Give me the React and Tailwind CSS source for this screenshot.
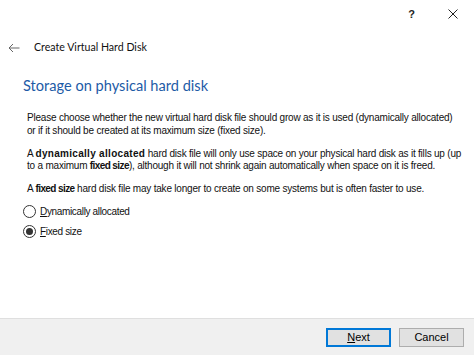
import { useState } from "react";

// Radio button drawn like the classic Windows one
function Radio({ checked, accel, rest, onClick }) {
  return (
    <div className="flex items-center h-[20px] cursor-default" onClick={onClick}>
      <span className="w-[13px] h-[13px] rounded-full border border-[#333] bg-white flex items-center justify-center">
        {checked && <span className="w-[7px] h-[7px] rounded-full bg-[#333]" />}
      </span>
      <span className="ml-[4px]">
        <span className="underline">{accel}</span>
        {rest}
      </span>
    </div>
  );
}

export default function App() {
  const [mode, setMode] = useState("fixed")

  return (
    <div className="w-[474px] h-[355px] bg-white flex flex-col text-[#000] font-['Liberation_Sans',Arial,sans-serif] overflow-hidden">
      {/* title bar */}
      <div className="h-[28px] flex items-center justify-end pr-[15px] text-[#222]">
        <span className="text-[11px] font-bold mr-[33px]">?</span>
        <svg width="10" height="10" viewBox="0 0 10 10" className="mr-[1px]">
          <path d="M0.5 0.5 L9.5 9.5 M9.5 0.5 L0.5 9.5" stroke="#222" strokeWidth="1" />
        </svg>
      </div>

      {/* wizard header */}
      <div className="h-[40px] flex items-center pl-[8px]">
        <svg width="12" height="10" viewBox="0 0 12 10">
          <path d="M11.5 5 H1 M5 1 L1 5 L5 9" stroke="#666" strokeWidth="1" fill="none" />
        </svg>
        <span className="ml-[14px] font-['Lato',sans-serif] text-[10.6px] text-[#111]">Create Virtual Hard Disk</span>
      </div>

      {/* page */}
      <div className="flex-1 pl-[23px]">
        <h1 className="mt-[8px] font-['Lato',sans-serif] text-[14.6px] leading-[20px] text-[#1d5ba6]">Storage on physical hard disk</h1>

        <div className="pl-[4px] mt-[16px] text-[10px] leading-[12.5px] tracking-[-0.21px] text-[#111] whitespace-nowrap space-y-[10.5px]">
          <p>
            Please choose whether the new virtual hard disk file should grow as it is used (dynamically allocated)
            <br />
            or if it should be created at its maximum size (fixed size).
          </p>
          <p>
            A <b className="tracking-[0.3px]">dynamically allocated</b> hard disk file will only use space on your physical hard disk as it fills up (up
            <br />
            to a maximum <b className="tracking-[-0.6px]">fixed size</b>), although it will not shrink again automatically when space on it is freed.
          </p>
          <p>
            A <b className="tracking-[-0.6px]">fixed size</b> hard disk file may take longer to create on some systems but is often faster to use.
          </p>
        </div>

        <div className="mt-[6px] text-[10px] tracking-[-0.34px] text-[#111]">
          <Radio checked={mode === "dynamic"} accel="D" rest="ynamically allocated" onClick={() => setMode("dynamic")} />
          <Radio checked={mode === "fixed"} accel="F" rest="ixed size" onClick={() => setMode("fixed")} />
        </div>
      </div>

      {/* buttons */}
      <div className="h-[37px] bg-[#f0f0f0] border-t border-[#dfdfdf] flex items-center justify-end pr-[10px] gap-[8px] text-[11px]">
        <button className="w-[65px] h-[19px] bg-[#e1e1e1] border-2 border-[#0078d7] flex items-center justify-center">
          <span><span className="underline">N</span>ext</span>
        </button>
        <button className="w-[65px] h-[19px] bg-[#e1e1e1] border border-[#adadad] flex items-center justify-center">
          Cancel
        </button>
      </div>
    </div>
  );
}
